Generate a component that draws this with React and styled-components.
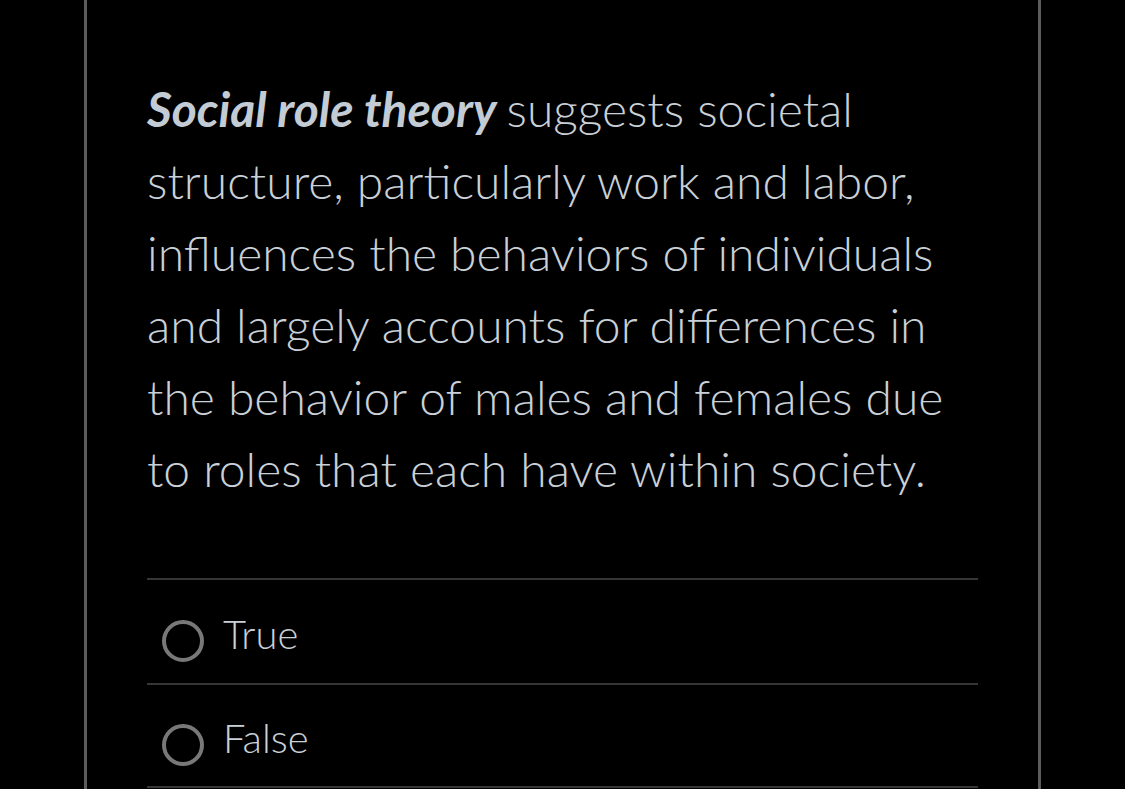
import React from 'react';
import styled, { createGlobalStyle } from 'styled-components';

const GlobalStyle = createGlobalStyle`
  html, body {
    margin: 0;
    padding: 0;
    background: #000;
  }
  body {
    font-family: Lato, "Noto Sans", sans-serif;
  }
`;

const Page = styled.div`
  min-height: 789px;
  background: #000;
  display: flex;
  justify-content: center;
`;

const Panel = styled.div`
  width: 957px;
  box-sizing: border-box;
  border-left: 3px solid #5c5c5c;
  border-right: 3px solid #5c5c5c;
  padding: 73px 60px 0;
  min-height: 789px;
`;

const Question = styled.p`
  margin: 0 0 73px;
  font-size: 48px;
  line-height: 72px;
  font-weight: 300;
  color: #c9d0d7;

  & strong {
    font-weight: 700;
    font-style: italic;
    color: #c3ccd5;
    margin-right: -3px;
  }
`;

const Options = styled.div`
  display: flex;
  flex-direction: column;
`;

const Option = styled.label`
  display: flex;
  align-items: center;
  gap: 19px;
  height: 105px;
  padding: 19px 0 0 15px;
  box-sizing: border-box;
  border-top: 2px solid #363636;
  cursor: pointer;
  &:last-child {
    border-bottom: 2px solid #363636;
  }
`;

const Radio = styled.span`
  width: 42px;
  height: 42px;
  box-sizing: border-box;
  border: 4px solid #787878;
  border-radius: 50%;
  flex-shrink: 0;
`;

const OptionText = styled.span`
  font-size: 40px;
  font-weight: 300;
  color: #c9d0d7;
  line-height: 1;
  margin-top: -15px;
`;

export default function App() {
  return (
    <>
      <GlobalStyle />
      <Page>
        <Panel>
          <Question>
            <strong>Social role theory</strong> suggests societal structure, particularly work and
            labor, influences the behaviors of individuals and largely accounts for differences in
            the behavior of males and females due to roles that each have within society.
          </Question>
          <Options>
            {['True', 'False'].map((label) => (
              <Option key={label}>
                <Radio />
                <OptionText>{label}</OptionText>
              </Option>
            ))}
          </Options>
        </Panel>
      </Page>
    </>
  );
}
